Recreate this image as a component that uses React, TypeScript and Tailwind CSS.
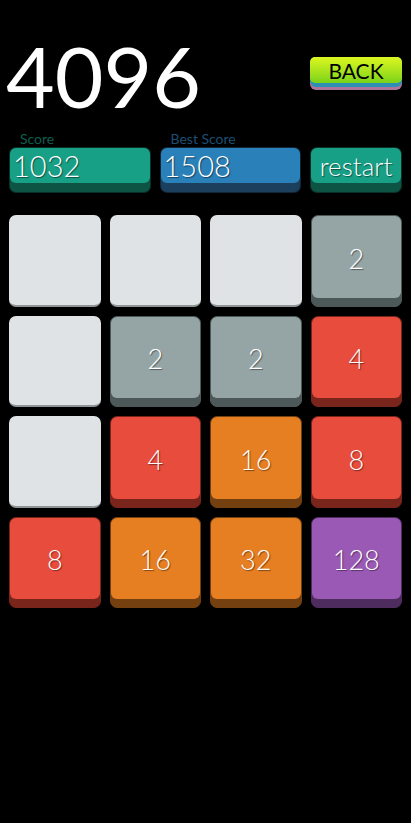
import React from "react";

type Tile = { v: number | null };

const board: (number | null)[][] = [
  [null, null, null, 2],
  [null, 2, 2, 4],
  [null, 4, 16, 8],
  [8, 16, 32, 128],
];

// face / lip / border colours per value
const tileStyle: Record<number, { face: string; lip: string; edge: string }> = {
  2: { face: "bg-[#95a5a6]", lip: "bg-[#4d5859]", edge: "border-[#4d5859]" },
  4: { face: "bg-[#e74c3c]", lip: "bg-[#7a251c]", edge: "border-[#7a251c]" },
  8: { face: "bg-[#e74c3c]", lip: "bg-[#7a251c]", edge: "border-[#7a251c]" },
  16: { face: "bg-[#e67e22]", lip: "bg-[#754010]", edge: "border-[#754010]" },
  32: { face: "bg-[#e67e22]", lip: "bg-[#754010]", edge: "border-[#754010]" },
  128: { face: "bg-[#9b59b6]", lip: "bg-[#4f2c5e]", edge: "border-[#4f2c5e]" },
};

const font = { fontFamily: "Lato, 'Noto Sans', sans-serif" };

function Cell({ v }: Tile) {
  if (v === null) {
    return (
      <div className="aspect-square rounded-[7px] bg-[#dfe3e6] border-b-[2px] border-[#8f9496]" />
    );
  }
  const s = tileStyle[v];
  return (
    <div className={`aspect-square rounded-[7px] border ${s.edge} ${s.lip} pb-[8px] flex`}>
      <div
        className={`flex-1 rounded-[6px] ${s.face} flex items-center justify-center pt-[4px] text-white text-[27px] font-light [text-shadow:1px_1px_1px_rgba(0,0,0,0.45)]`}
        style={font}
      >
        {v}
      </div>
    </div>
  );
}

function ScoreBox({
  label,
  value,
  face,
  lip,
  labelColor,
}: {
  label: string;
  value: string;
  face: string;
  lip: string;
  labelColor: string;
}) {
  return (
    <div className="flex-1 flex flex-col">
      <div className={`pl-[11px] text-[14px] leading-[15px] ${labelColor}`} style={font}>
        {label}
      </div>
      <div className={`mt-[1px] rounded-[7px] ${lip} pb-[9px] border border-black/40`}>
        <div
          className={`h-[35px] rounded-[6px] ${face} flex items-center pl-[3px] text-white text-[29px] font-light leading-none [text-shadow:1px_1px_1px_rgba(0,0,0,0.5)]`}
          style={font}
        >
          {value}
        </div>
      </div>
    </div>
  );
}

export default function App() {
  return (
    <div className="min-h-[823px] w-full bg-black">
      {/* header */}
      <div className="flex items-start justify-between pl-[6px] pr-[9px] pt-[30px]">
        <div className="text-white text-[84px] leading-[92px] font-normal" style={font}>
          4096
        </div>
        <button className="mt-[27px] w-[92px] rounded-[6px] bg-[#b0739a] pb-[3px]">
          <div className="rounded-[6px] bg-[#2c8fb3] pb-[4px]">
            <div
              className="h-[26px] rounded-[5px] bg-gradient-to-b from-[#dcf720] to-[#7ad21a] flex items-center justify-center text-black text-[21px] leading-none"
              style={font}
            >
              BACK
            </div>
          </div>
        </button>
      </div>

      {/* scores */}
      <div className="flex items-end gap-[9px] px-[9px] mt-[9px]">
        <ScoreBox
          label="Score"
          value="1032"
          face="bg-[#17a086]"
          lip="bg-[#0e5445]"
          labelColor="text-[#0e5f4f]"
        />
        <ScoreBox
          label="Best Score"
          value="1508"
          face="bg-[#2a80b9]"
          lip="bg-[#1b3f5c]"
          labelColor="text-[#1c4f73]"
        />
        <div className="w-[92px] rounded-[7px] bg-[#0e5445] pb-[9px] border border-black/40">
          <div
            className="h-[35px] rounded-[6px] bg-[#17a086] flex items-center justify-center text-white text-[26px] font-light leading-none [text-shadow:1px_1px_1px_rgba(0,0,0,0.5)]"
            style={font}
          >
            restart
          </div>
        </div>
      </div>

      {/* board */}
      <div className="grid grid-cols-4 gap-[9px] px-[9px] mt-[22px]">
        {board.flat().map((v, i) => (
          <Cell key={i} v={v} />
        ))}
      </div>
    </div>
  );
}
